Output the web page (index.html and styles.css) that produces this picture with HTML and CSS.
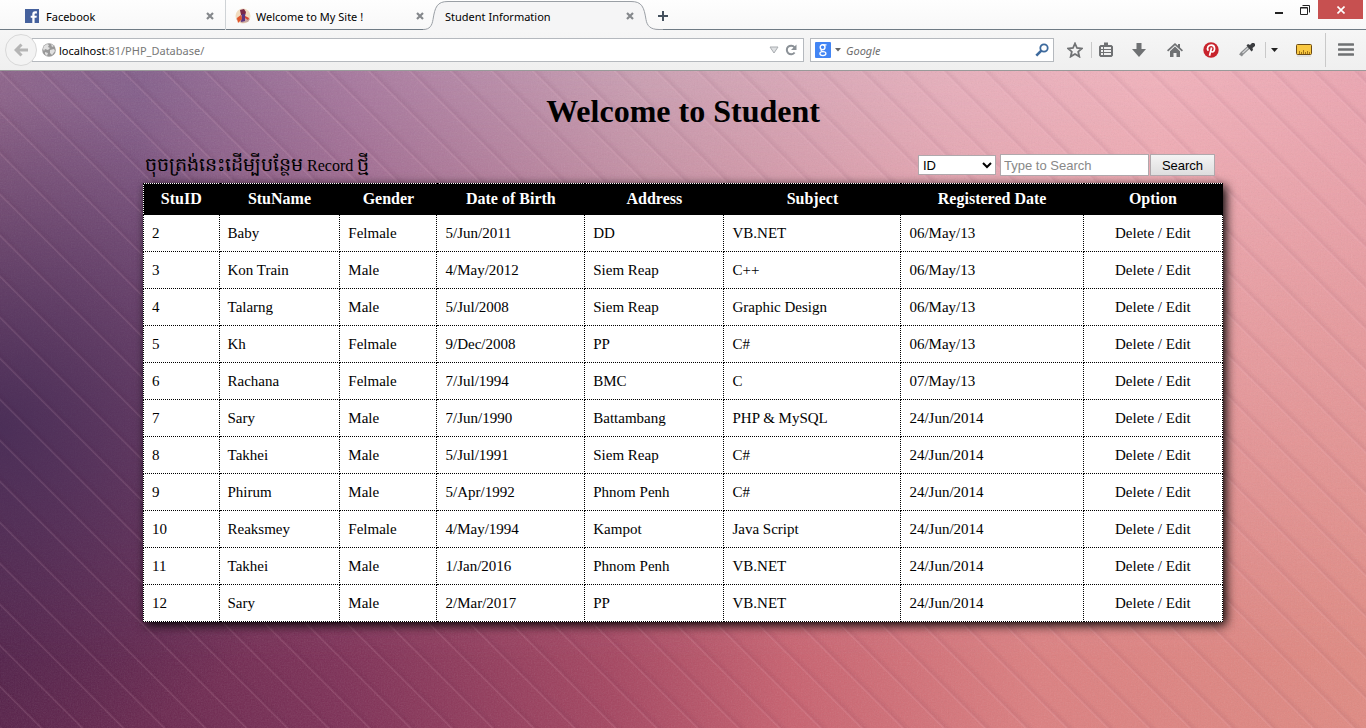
FILE: index.html
```
<!DOCTYPE html>
<html lang="en">
<head>
    <meta charset="UTF-8">
    <meta name="viewport" content="width=device-width, initial-scale=1.0">
    <title>Student Information</title>

    <link rel="stylesheet" href="styles.css">
</head>
<body>
    <!-- Browser -->
    <header class="browser">
        <div class="tabs">
            <div class="tab">
                <svg class="favicon" width="14" height="14" viewBox="0 0 14 14"><rect width="14" height="14" fill="#45619d"/><path d="M9.600 14V8.800h1.900l.3-2.100H9.600V5.400c0-.7.3-1 1-1h1.300V2.300h-1.800C8.200 2.300 7.300 3.400 7.300 5.200v1.500H5.700v2.100h1.600V14z" fill="#fff"/></svg>
                <span class="tab-title">Facebook</span>
                <button class="tab-close" aria-label="Close tab"><svg width="8" height="8" viewBox="0 0 8 8"><path d="M1 1l6 6M7 1L1 7" stroke="#85888c" stroke-width="2.200"/></svg></button>
            </div>
            <div class="tab tab-second">
                <svg class="favicon" width="16" height="16" viewBox="0 0 16 16"><circle cx="8" cy="8" r="7.500" fill="#f1dcc0"/><path d="M1 11l5-4 4 1 5 3-2 3-6 1z" fill="#c8a6a0"/><path d="M5 2l4-1 2 3-1 4-4-1z" fill="#7b2747"/><path d="M7 6l3 0 0 7-4 1z" fill="#5b3380"/><path d="M2 10l4-3 1 4-4 4z" fill="#e2562b"/><path d="M10 8l4 2-1 2-3-2z" fill="#d8412f"/></svg>
                <span class="tab-title">Welcome to My Site !</span>
                <button class="tab-close" aria-label="Close tab"><svg width="8" height="8" viewBox="0 0 8 8"><path d="M1 1l6 6M7 1L1 7" stroke="#85888c" stroke-width="2.200"/></svg></button>
            </div>
            <div class="tab active">
                <svg class="tab-shape" width="240" height="30" viewBox="0 0 240 30"><path d="M0 30v-.5c7 0 9-4 10-10C12 7 14 1.500 25 1.500H208c11 0 13 5.500 15 18 1 6 4 10 13 10v.5z" fill="#f5f5f6"/><path d="M0 29.500c7 0 9-4 10-10C12 7 14 1.500 25 1.500H208c11 0 13 5.500 15 18 1 6 4 10 13 10h4" fill="none" stroke="#9a9fa5"/></svg>
                <span class="tab-title">Student Information</span>
                <button class="tab-close" aria-label="Close tab"><svg width="8" height="8" viewBox="0 0 8 8"><path d="M1 1l6 6M7 1L1 7" stroke="#85888c" stroke-width="2.200"/></svg></button>
            </div>
            <button class="new-tab" aria-label="New tab"><svg width="10" height="10" viewBox="0 0 10 10"><path d="M5 0v10M0 5h10" stroke="#45515e" stroke-width="2"/></svg></button>
            <div class="window-buttons">
                <button aria-label="Minimize"><svg width="10" height="10" viewBox="0 0 10 10"><path d="M1 8h8" stroke="#222" stroke-width="2"/></svg></button>
                <button aria-label="Restore"><svg width="10" height="10" viewBox="0 0 10 10"><path d="M.5 2.500h7v7h-7zM.5 3h7M2.500 .5h7v7" fill="none" stroke="#222"/></svg></button>
                <button class="window-close" aria-label="Close"><svg width="8" height="8" viewBox="0 0 8 8"><path d="M.5 .5l7 7M7.500 .5l-7 7" stroke="#fff" stroke-width="1.600"/></svg></button>
            </div>
        </div>

        <div class="toolbar">
            <button class="back" aria-label="Back"><svg width="14" height="14" viewBox="0 0 14 14"><path d="M7.500 1.500L2 7l5.500 5.500M2.500 7H14" fill="none" stroke="#b5b5b5" stroke-width="3"/></svg></button>
            <div class="address">
                <svg width="14" height="14" viewBox="0 0 14 14"><circle cx="7" cy="7" r="6.800" fill="#999"/><path d="M2 3l3-2 2 1-1 2 2 1-2 2-3-1-1 2-1-2zM8 7l4-1 1 2-3 4-2-2zM9 1l3 2-2 1zM3 9l3 1-1 3-2-2z" fill="#e0e0e0"/></svg>
                <a class="url" href="#"><span class="host">localhost</span>:81/PHP_Database/</a>
                <svg width="10" height="8" viewBox="0 0 10 8"><path d="M1 1h8L5 7z" fill="#dfe1e3" stroke="#a9adb1"/></svg>
                <button aria-label="Reload"><svg width="12" height="12" viewBox="0 0 12 12"><path d="M9.600 8.500A4.300 4.300 0 1 1 9.500 3.300" fill="none" stroke="#8b9197" stroke-width="2"/><path d="M11.500 .5v5.500H6z" fill="#8b9197"/></svg></button>
            </div>
            <div class="google">
                <svg width="16" height="16" viewBox="0 0 16 16"><rect width="16" height="16" rx="1" fill="#4285f4"/><ellipse cx="7.600" cy="5.200" rx="2.400" ry="2.400" fill="none" stroke="#fff" stroke-width="1.400"/><ellipse cx="7.900" cy="11.600" rx="3" ry="2" fill="none" stroke="#fff" stroke-width="1.300"/><path d="M8 2.800h3.500M6.500 7.600c-1 1.200 0 1.600 1.800 2" fill="none" stroke="#fff" stroke-width="1.200"/></svg>
                <svg class="engine-arrow" width="6" height="4" viewBox="0 0 6 4"><path d="M0 0h6L3 3.500z" fill="#666"/></svg>
                <input type="text" placeholder="Google" aria-label="Search with Google">
                <button aria-label="Go"><svg width="14" height="14" viewBox="0 0 14 14"><circle cx="9" cy="5" r="3.700" fill="none" stroke="#3d6a9d" stroke-width="1.800"/><path d="M6.300 7.700L1.300 12.700" stroke="#3d6a9d" stroke-width="2.600"/></svg></button>
            </div>
            <nav class="icons">
                <button class="icon-star" aria-label="Bookmark"><svg width="16" height="16" viewBox="0 0 16 16"><path d="M8 1.500l2 4.500 4.800 .5-3.600 3.200 1.100 4.900L8 12l-4.300 2.600 1.100-4.900L1.200 6.500 6 6z" fill="none" stroke="#707274" stroke-width="1.800"/></svg></button>
                <button class="icon-list" aria-label="Bookmarks list"><svg width="14" height="16" viewBox="0 0 14 16"><path d="M5 .5h4V3h3.500L14 4.500v9L12.500 15h-11L0 13.500v-9L1.500 3H5z" fill="#6f7173"/><path d="M2 5h2v2H2zM5 5h7v2H5zM2 8h2v2H2zM5 8h7v2H5zM2 11h2v2H2zM5 11h7v2H5z" fill="#f0f0f0"/></svg></button>
                <button aria-label="Downloads"><svg width="14" height="14" viewBox="0 0 14 14"><path d="M4.500 0h5v6H14l-7 8-7-8h4.500z" fill="#6f7173"/></svg></button>
                <button aria-label="Home"><svg width="16" height="14" viewBox="0 0 16 14"><path d="M8 0l3 2.700V1h2v3.500l3 2.800-1.200 1.200L8 2.200 1.200 8.500 0 7.300z" fill="#6f7173"/><path d="M8 3.500l5 4.700V14H9.500v-4h-3v4H3V8.200z" fill="#6f7173"/></svg></button>
                <button aria-label="Pinterest"><svg width="16" height="16" viewBox="0 0 16 16"><circle cx="8" cy="8" r="7.700" fill="#c8232c"/><path d="M5.300 8.800C3.300 5.500 5.500 3.200 8.300 3.200c4.500 0 4 6.800 .8 6.800-.9 0-1.500-.5-1.500-1.200M8.600 5.500L6.500 13.700" fill="none" stroke="#fff" stroke-width="1.700"/></svg></button>
                <button aria-label="Color picker"><svg width="16" height="14" viewBox="0 0 16 14"><path d="M9.500 4.500L3 10.500l-1.500 2" stroke="#8a8c8e" stroke-width="3.500" fill="none"/><path d="M9 5L3.500 10" stroke="#d4d6d8" stroke-width="1.200"/><path d="M7.500 2.500l1.500-1.500 2 1 2-2h2l1 1v2l-2.500 2 .5 2-1.500 1.500z" fill="#3b3d40"/></svg></button>
                <button class="icon-caret" aria-label="Color picker menu"><svg width="7" height="4" viewBox="0 0 7 4"><path d="M0 0h7L3.500 4z" fill="#222"/></svg></button>
                <button class="icon-ruler" aria-label="Ruler"><svg width="16" height="14" viewBox="0 0 16 14"><rect x=".5" y="1.500" width="15" height="10" rx="1" fill="#f9c841" stroke="#6c4b14"/><path d="M3.500 11V8M5.500 11V9M7.500 11V7M9.500 11V9M11.500 11V8M13.500 11V9" stroke="#a37518"/><path d="M1 13h14" stroke="#d2d2d2"/></svg></button>
                <button class="icon-menu" aria-label="Menu"><svg width="16" height="14" viewBox="0 0 16 14"><path d="M1 1.500h14M1 6.500h14M1 11.500h14" stroke="#6f7173" stroke-width="2.600" stroke-linecap="round"/></svg></button>
            </nav>
        </div>
    </header>

    <!-- Page -->
    <main class="page">
        <svg class="grain" width="100%" height="100%" aria-hidden="true">
            <filter id="noise"><feTurbulence type="fractalNoise" baseFrequency="0.7" numOctaves="2" seed="3"/><feColorMatrix type="saturate" values="0"/></filter>
            <rect width="100%" height="100%" filter="url(#noise)"/>
        </svg>
        <div class="container">
            <h1>Welcome to Student</h1>

            <div class="top-row">
                <a class="add-link" href="#"><span lang="km">ចុចត្រង់នេះដើម្បីបន្ថែម</span> Record <span lang="km">ថ្មី</span></a>
                <form class="search-form">
                    <select aria-label="Search by">
                        <option>ID</option>
                        <option>Name</option>
                    </select>
                    <input type="text" placeholder="Type to Search" aria-label="Type to Search">
                    <button type="button">Search</button>
                </form>
            </div>

            <table class="students">
                <colgroup>
                    <col class="col-id">
                    <col class="col-name">
                    <col class="col-gender">
                    <col class="col-birth">
                    <col class="col-address">
                    <col class="col-subject">
                    <col class="col-registered">
                    <col class="col-option">
                </colgroup>
                <thead>
                    <tr><th>StuID</th><th>StuName</th><th>Gender</th><th>Date of Birth</th><th>Address</th><th>Subject</th><th>Registered Date</th><th>Option</th></tr>
                </thead>
                <tbody>
                    <tr><td>2</td><td>Baby</td><td>Felmale</td><td>5/Jun/2011</td><td>DD</td><td>VB.NET</td><td>06/May/13</td><td class="option"><a href="#">Delete</a> / <a href="#">Edit</a></td></tr>
                    <tr><td>3</td><td>Kon Train</td><td>Male</td><td>4/May/2012</td><td>Siem Reap</td><td>C++</td><td>06/May/13</td><td class="option"><a href="#">Delete</a> / <a href="#">Edit</a></td></tr>
                    <tr><td>4</td><td>Talarng</td><td>Male</td><td>5/Jul/2008</td><td>Siem Reap</td><td>Graphic Design</td><td>06/May/13</td><td class="option"><a href="#">Delete</a> / <a href="#">Edit</a></td></tr>
                    <tr><td>5</td><td>Kh</td><td>Felmale</td><td>9/Dec/2008</td><td>PP</td><td>C#</td><td>06/May/13</td><td class="option"><a href="#">Delete</a> / <a href="#">Edit</a></td></tr>
                    <tr><td>6</td><td>Rachana</td><td>Felmale</td><td>7/Jul/1994</td><td>BMC</td><td>C</td><td>07/May/13</td><td class="option"><a href="#">Delete</a> / <a href="#">Edit</a></td></tr>
                    <tr><td>7</td><td>Sary</td><td>Male</td><td>7/Jun/1990</td><td>Battambang</td><td>PHP &amp; MySQL</td><td>24/Jun/2014</td><td class="option"><a href="#">Delete</a> / <a href="#">Edit</a></td></tr>
                    <tr><td>8</td><td>Takhei</td><td>Male</td><td>5/Jul/1991</td><td>Siem Reap</td><td>C#</td><td>24/Jun/2014</td><td class="option"><a href="#">Delete</a> / <a href="#">Edit</a></td></tr>
                    <tr><td>9</td><td>Phirum</td><td>Male</td><td>5/Apr/1992</td><td>Phnom Penh</td><td>C#</td><td>24/Jun/2014</td><td class="option"><a href="#">Delete</a> / <a href="#">Edit</a></td></tr>
                    <tr><td>10</td><td>Reaksmey</td><td>Felmale</td><td>4/May/1994</td><td>Kampot</td><td>Java Script</td><td>24/Jun/2014</td><td class="option"><a href="#">Delete</a> / <a href="#">Edit</a></td></tr>
                    <tr><td>11</td><td>Takhei</td><td>Male</td><td>1/Jan/2016</td><td>Phnom Penh</td><td>VB.NET</td><td>24/Jun/2014</td><td class="option"><a href="#">Delete</a> / <a href="#">Edit</a></td></tr>
                    <tr><td>12</td><td>Sary</td><td>Male</td><td>2/Mar/2017</td><td>PP</td><td>VB.NET</td><td>24/Jun/2014</td><td class="option"><a href="#">Delete</a> / <a href="#">Edit</a></td></tr>
                </tbody>
            </table>
        </div>
    </main>
</body>
</html>
```
FILE: styles.css
```
* {
    box-sizing: border-box;
}

body {
    display: flex;
    flex-direction: column;
    min-height: 100vh;
    margin: 0;
    font-family: "Liberation Serif", "Times New Roman", serif;
    font-size: 16px;
    color: #000;
}

a {
    color: inherit;
    text-decoration: none;
}

/* browser */
.browser {
    font-family: "Noto Sans", "Open Sans", sans-serif;
    font-size: 11px;
    background-color: #f3f3f3;
    border-bottom: 1px solid #999;
}

.browser button {
    display: flex;
    align-items: center;
    justify-content: center;
    padding: 0;
    border: none;
    background: none;
}

.tabs {
    display: flex;
    height: 30px;
    padding-left: 15px;
    background: linear-gradient(#fefefe, #f8f8f8);
    border-bottom: 1px solid #6f7b85;
}

.tab {
    position: relative;
    display: flex;
    align-items: center;
    width: 210px;
    height: 30px;
    padding: 2px 10px 0;
}

.tab-second {
    padding-left: 9px;
    border-left: 1px solid #cfd3d6;
}

.favicon {
    margin-right: 7px;
}

.tab-second .favicon {
    margin-right: 5px;
}

.tab-title {
    position: relative;
    flex: 1;
    white-space: nowrap;
}

.tab-close {
    position: relative;
    width: 10px;
}

.tab-shape {
    position: absolute;
    left: -12px;
    top: 0;
}

.new-tab {
    width: 36px;
    height: 31px;
}

.window-buttons {
    display: flex;
    margin-left: auto;
    margin-right: 3px;
    height: 19px;
}

.window-buttons button {
    width: 26px;
}

.window-buttons .window-close {
    width: 45px;
    background-color: #c75050;
}

.toolbar {
    display: flex;
    align-items: center;
    height: 40px;
    padding-left: 5px;
    background: linear-gradient(#f6f6f6, #efefef);
}

.toolbar .back {
    position: relative;
    width: 32px;
    height: 32px;
    border: 1px solid #d8d8d8;
    border-radius: 50%;
    background-color: #f3f3f3;
}

.address {
    display: flex;
    flex: 1;
    align-items: center;
    height: 24px;
    margin-left: -5px;
    padding: 0 6px 0 9px;
    background-color: #fff;
    border: 1px solid #b5b9be;
}

.url {
    flex: 1;
    margin-left: 3px;
    color: #777;
}

.host {
    color: #000;
}

.address button {
    margin-left: 6px;
}

.google {
    display: flex;
    align-items: center;
    width: 244px;
    height: 24px;
    margin: 0 5px 0 6px;
    padding: 0 4px;
    background-color: #fff;
    border: 1px solid #b5b9be;
}

.engine-arrow {
    margin-left: 4px;
}

.google input {
    flex: 1;
    min-width: 0;
    margin-left: 5px;
    padding: 0;
    border: none;
    background: none;
    font: italic 11px "Noto Sans", sans-serif;
}

.google input::placeholder {
    color: #6d6d6d;
}

.icons {
    display: flex;
    align-items: center;
}

.icons button {
    width: 36px;
    height: 16px;
}

.icons .icon-star {
    width: 32px;
}

.icons .icon-list {
    width: 30px;
    padding-right: 2px;
    border-left: 1px solid #c9c9c9;
}

.icons .icon-caret {
    width: 18px;
    border-left: 1px solid #c9c9c9;
}

.icons .icon-ruler {
    width: 42px;
}

.icons .icon-menu {
    width: 41px;
    height: 34px;
    border-left: 1px solid #c9c9c9;
}

/* page */
.page {
    position: relative;
    flex: 1;
    background: linear-gradient(to right, #5a2149, #7d2f56 25%, #a54560 45%, #c8616f 58%, #dc7f80 76%, #e08a82);
}

.page::before {
    content: "";
    position: absolute;
    inset: 0;
    background: linear-gradient(to right, #8d648b, #84608c 10%, #a8799f 26%, #cba0b3 47%, #e8b0bd 70%, #f2b2bc 85%, #eca6b2);
    mask-image: linear-gradient(to bottom, #000, transparent 90%);
}

/* diagonal pleats of the cloth */
.page::after {
    content: "";
    position: absolute;
    inset: 0;
    background:
        repeating-linear-gradient(45deg, rgba(255, 205, 220, 0.13) 0, rgba(60, 0, 40, 0.06) 2px, transparent 7px, transparent 28px, rgba(255, 205, 220, 0.13) 29px),
        radial-gradient(ellipse 25% 50% at 0 54%, rgba(62, 40, 82, 0.75), rgba(62, 40, 82, 0) 100%);
}

.grain {
    position: absolute;
    top: 0;
    left: 0;
    opacity: 0.14;
}

.container {
    position: relative;
    z-index: 1;
    max-width: 1080px;
    margin: 0 auto;
}

h1 {
    margin: 0;
    padding: 22px 0 24px;
    font-size: 32px;
    line-height: 37px;
    text-align: center;
}

.top-row {
    display: flex;
    justify-content: space-between;
    align-items: center;
    height: 29px;
    padding: 0 8px 7px 2px;
}

.add-link {
    line-height: 22px;
}

.add-link span {
    font-size: 19px;
}

.search-form {
    display: flex;
    align-items: center;
}

.search-form select,
.search-form input,
.search-form button {
    height: 22px;
    border: 1px solid #b0a8ac;
    border-radius: 0;
    font: 13px "Liberation Sans", Arial, sans-serif;
}

.search-form select {
    width: 78px;
    height: 20px;
    margin-right: 4px;
    background-color: #fff;
}

.search-form input {
    width: 149px;
    margin-right: 1px;
    padding: 1px 3px;
}

.search-form input::placeholder {
    color: #888;
}

.search-form button {
    width: 65px;
    padding: 0;
    background: linear-gradient(#f4f4f4, #dedede);
}

.students {
    width: 100%;
    table-layout: fixed;
    border-collapse: collapse;
    background-color: #fff;
    box-shadow: 3px 3px 10px #000;
}

.students th,
.students td {
    padding: 9px 8px;
    border: 1px dotted #000;
    font-size: 15px;
    line-height: 18px;
    text-align: left;
}

.students th {
    padding: 6px 8px;
    background-color: #000;
    color: #fff;
    font-size: 16px;
    text-align: center;
}

.students .option {
    text-align: center;
}

.col-id { width: 7%; }
.col-name { width: 11.2%; }
.col-gender { width: 9%; }
.col-birth { width: 13.7%; }
.col-address { width: 12.9%; }
.col-subject { width: 16.4%; }
.col-registered { width: 16.9%; }
.col-option { width: 12.9%; }
```
